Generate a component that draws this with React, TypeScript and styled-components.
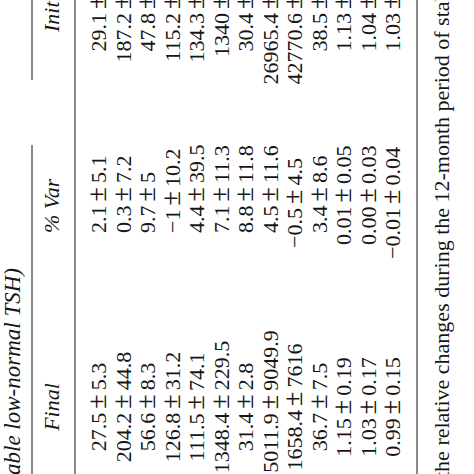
import styled, { createGlobalStyle } from 'styled-components'

const GlobalStyle = createGlobalStyle`
	html, body {
		margin: 0;
		padding: 0;
		background: #fff;
	}
`

// the whole scanned page is turned a quarter left, as in the source
const Sheet = styled.div`
	width: 474px;
	height: 474px;
	overflow: hidden;
	background: #fff;
	transform: rotate(-90deg);
	font-family: 'Liberation Serif', 'Times New Roman', serif;
	color: #161616;
`

const GroupTitle = styled.div`
	display: flex;
	justify-content: flex-end;
	width: 206px;
	height: 31px;
	padding-top: 1px;
	box-sizing: border-box;
	font-size: 23px;
	font-style: italic;
	line-height: 24px;
	white-space: nowrap;
`

const RuleRow = styled.div`
	display: flex;
	gap: 65px;
`

const Rule = styled.div<{ $width?: number }>`
	flex: ${(p) => (p.$width ? `0 0 ${p.$width}px` : '1 1 auto')};
	height: 2px;
	background: #8a8a8a;
`

const Grid = styled.div`
	display: grid;
	grid-template-columns: 134px 236px 91px 1fr;
	white-space: nowrap;
`

const HeaderRow = styled(Grid)`
	padding: 7px 0 10px;
	font-size: 22px;
	font-style: italic;
	line-height: 24px;
`

const Body = styled.div`
	padding: 11px 0 10px;
`

const Row = styled(Grid)`
	font-size: 22px;
	line-height: 24.5px;
`

const FinalCell = styled.div`
	display: flex;
	justify-content: center;
`

const VarCell = styled.div<{ $shift?: number }>`
	padding-left: ${(p) => 107 + (p.$shift ?? 0)}px;
`

const InitialHead = styled.div`
	grid-column: 3 / 5;
	padding-left: 72px;
`

const InitialMean = styled.div`
	text-align: right;
`

const InitialRest = styled.div`
	overflow: visible;
`

const Pm = styled.span`
	font-size: 1.2em;
	line-height: 0;
	margin: 0 4px;
`

const Note = styled.div`
	margin: 12px 0 0 -4px;
	font-size: 22px;
	line-height: 24px;
	white-space: nowrap;
`

type Stat = [string, string]

type TableRow = {
	final: Stat
	change: Stat
	shift?: number
	initial: string
}

const rows: TableRow[] = [
	{ final: ['27.5', '5.3'], change: ['2.1', '5.1'], initial: '29.1' },
	{ final: ['204.2', '44.8'], change: ['0.3', '7.2'], initial: '187.2' },
	{ final: ['56.6', '8.3'], change: ['9.7', '5'], initial: '47.8' },
	{ final: ['126.8', '31.2'], change: ['\u22121', '10.2'], initial: '115.2' },
	{ final: ['111.5', '74.1'], change: ['4.4', '39.5'], initial: '134.3' },
	{ final: ['1348.4', '229.5'], change: ['7.1', '11.3'], initial: '1340' },
	{ final: ['31.4', '2.8'], change: ['8.8', '11.8'], initial: '30.4' },
	{ final: ['25011.9', '9049.9'], change: ['4.5', '11.6'], initial: '26965.4' },
	{ final: ['1658.4', '7616'], change: ['\u22120.5', '4.5'], shift: -15, initial: '42770.6' },
	{ final: ['36.7', '7.5'], change: ['3.4', '8.6'], initial: '38.5' },
	{ final: ['1.15', '0.19'], change: ['0.01', '0.05'], shift: -12, initial: '1.13' },
	{ final: ['1.03', '0.17'], change: ['0.00', '0.03'], shift: -12, initial: '1.04' },
	{ final: ['0.99', '0.15'], change: ['\u22120.01', '0.04'], shift: -26, initial: '1.03' },
]

function MeanSd({ value }: { value: Stat }) {
	return (
		<span>
			{value[0]}
			<Pm>±</Pm>
			{value[1]}
		</span>
	)
}

export default function App() {
	return (
		<>
			<GlobalStyle />
			<Sheet>
				<GroupTitle>(stable low-normal TSH)</GroupTitle>

				<RuleRow>
					<Rule $width={329} />
					<Rule />
				</RuleRow>

				<HeaderRow>
					<FinalCell>Final</FinalCell>
					<VarCell>% Var</VarCell>
					<InitialHead>Initial</InitialHead>
				</HeaderRow>

				<Rule />

				<Body>
					{rows.map((row) => (
						<Row key={row.initial}>
							<FinalCell>
								<MeanSd value={row.final} />
							</FinalCell>
							<VarCell $shift={row.shift}>
								<MeanSd value={row.change} />
							</VarCell>
							<InitialMean>{row.initial}</InitialMean>
							<InitialRest>
								<Pm>±</Pm>
							</InitialRest>
						</Row>
					))}
				</Body>

				<Rule />

				<Note>the relative changes during the 12-month period of stable</Note>
			</Sheet>
		</>
	)
}
